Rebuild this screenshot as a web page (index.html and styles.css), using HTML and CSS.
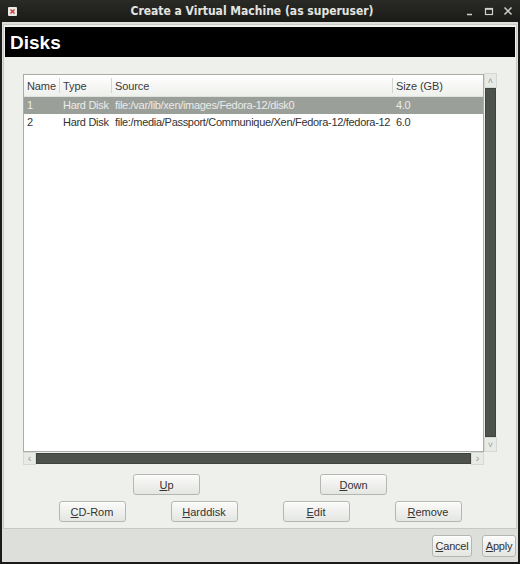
FILE: index.html
```html
<!DOCTYPE html>
<html lang="en">
<head>
    <meta charset="UTF-8">
    <title>Create a Virtual Machine (as superuser)</title>
    <link rel="stylesheet" href="styles.css">
</head>
<body>
    <div class="window">
        <div class="titlebar">
            <div class="menu-btn">
                <svg width="9" height="9" viewBox="0 0 9 9"><path d="M2.5 2.5 L6.5 6.5 M6.5 2.5 L2.5 6.5" stroke="#c33" stroke-width="1.3"/></svg>
            </div>
            <div class="title">Create a Virtual Machine (as superuser)</div>
            <div class="controls">
                <svg width="10" height="10" viewBox="0 0 10 10"><path d="M2 8.5 H7" stroke="#cfd1cc" stroke-width="1.5"/></svg>
                <svg width="10" height="10" viewBox="0 0 10 10"><rect x="1.5" y="2.5" width="7" height="6" fill="none" stroke="#cfd1cc" stroke-width="1.2"/><path d="M1.5 3 H8.5" stroke="#cfd1cc" stroke-width="1.6"/></svg>
                <svg width="10" height="10" viewBox="0 0 10 10"><path d="M1.5 1.5 L8.5 8.5 M8.5 1.5 L1.5 8.5" stroke="#cfd1cc" stroke-width="1.5"/></svg>
            </div>
        </div>
        <div class="client">
            <div class="page">
                <div class="page-header">Disks</div>

                <div class="listwrap">
                    <div class="list">
                        <div class="row head">
                            <div class="c-name">Name</div>
                            <div class="c-type">Type</div>
                            <div class="c-src">Source</div>
                            <div class="c-size">Size (GB)</div>
                        </div>
                        <div class="row selected">
                            <div class="c-name">1</div>
                            <div class="c-type">Hard Disk</div>
                            <div class="c-src">file:/var/lib/xen/images/Fedora-12/disk0</div>
                            <div class="c-size">4.0</div>
                        </div>
                        <div class="row">
                            <div class="c-name">2</div>
                            <div class="c-type">Hard Disk</div>
                            <div class="c-src">file:/media/Passport/Communique/Xen/Fedora-12/fedora-12</div>
                            <div class="c-size">6.0</div>
                        </div>
                    </div>
                    <div class="vscroll">
                        <div class="arrow">&#708;</div>
                        <div class="trough"></div>
                        <div class="arrow">&#709;</div>
                    </div>
                    <div class="hscroll">
                        <div class="arrow">&lsaquo;</div>
                        <div class="trough"></div>
                        <div class="arrow">&rsaquo;</div>
                    </div>
                    <div class="corner"></div>
                </div>

                <div class="btn-row row-one">
                    <button class="btn"><u>U</u>p</button>
                    <button class="btn"><u>D</u>own</button>
                </div>
                <div class="btn-row row-two">
                    <button class="btn"><u>C</u>D-Rom</button>
                    <button class="btn"><u>H</u>arddisk</button>
                    <button class="btn"><u>E</u>dit</button>
                    <button class="btn"><u>R</u>emove</button>
                </div>
            </div>
            <div class="footer">
                <button class="btn cancel"><u>C</u>ancel</button>
                <button class="btn apply"><u>A</u>pply</button>
            </div>
        </div>
    </div>
</body>
</html>
```

FILE: styles.css
```css
body{
    margin: 0;
    background-color: #1b1c19;
    font-family: "Liberation Sans", Arial, sans-serif;
    font-size: 11px;
    color: #333;
}

.window{
    width: 520px;
    height: 564px;
    display: flex;
    flex-direction: column;
}

.titlebar{
    height: 22px;
    display: flex;
    align-items: center;
    padding: 0 6px 0 8px;
    background: linear-gradient(#2a2b27, #1a1b18);
}
.menu-btn{
    width: 9px;
    height: 9px;
    background-color: #e9e9e6;
    border-radius: 1px;
    margin-top: 1px;
}
.menu-btn svg{
    display: block;
}
.title{
    flex: 1;
    text-align: center;
    color: #e4e4e0;
    font-family: "DejaVu Sans Condensed", "DejaVu Sans", sans-serif;
    font-size: 12px;
    font-weight: bold;
    padding-left: 22px;
}
.controls{
    display: flex;
    gap: 9px;
    margin-right: 1px;
}
.controls svg{
    display: block;
}

.client{
    flex: 1;
    margin: 0 2px 2px;
    background-color: #dcdfda;
    display: flex;
    flex-direction: column;
}

.page{
    margin: 2px 1px 0 1px;
    height: 505px;
    box-sizing: border-box;
    background-color: #eef0ec;
    border: 1px solid #c7cac4;
    padding: 2px 1px 0;
}

.page-header{
    background-color: #000;
    color: #fff;
    font-size: 19px;
    font-weight: bold;
    height: 30px;
    line-height: 31px;
    padding-left: 5px;
}

.listwrap{
    margin: 16px 18px 0 18px;
    display: grid;
    grid-template-columns: 1fr 13px;
    grid-template-rows: 379px 13px;
}

.list{
    background-color: #fff;
    border: 1px solid #a9aca7;
    margin-top: 1px;
    overflow: hidden;
}
.row{
    display: flex;
    height: 17px;
    line-height: 17px;
    white-space: nowrap;
    letter-spacing: -0.3px;
}
.row > div{
    padding-left: 3px;
    box-sizing: border-box;
}
.row.head{
    height: 21px;
    line-height: 22px;
    color: #3a3a3a;
    letter-spacing: -0.1px;
    background: linear-gradient(#ffffff, #eef0ec);
    border-bottom: 1px solid #e0e2de;
}
.row.head > div{
    border-right: 1px solid #d3d5d0;
    height: 15px;
    line-height: 17px;
    margin-top: 3px;
}
.row.head > .c-size{
    border-right: 0;
}
.c-name{ width: 36px; }
.c-type{ width: 52px; }
.c-src{ width: 281px; }
.c-size{ flex: 1; }

.row.selected{
    background-color: #9b9f99;
    color: #ececea;
}

.vscroll{
    display: flex;
    flex-direction: column;
}
.hscroll{
    display: flex;
}
.arrow{
    width: 13px;
    height: 13px;
    box-sizing: border-box;
    background-color: #e8eae6;
    border: 1px solid #d6d8d3;
    color: #9a9c98;
    font-size: 9px;
    line-height: 11px;
    text-align: center;
}
.hscroll .arrow{
    font-size: 11px;
}
.vscroll .arrow{
    height: 15px;
    line-height: 14px;
}
.trough{
    flex: 1;
    background-color: #4e524d;
    border: 1px solid #3f423e;
}
.vscroll .trough{
    margin: 0 1px;
}
.hscroll .trough{
    margin: 1px 0;
}

.btn-row{
    display: flex;
    justify-content: center;
}
.row-one{
    margin-top: 9px;
    gap: 120px;
}
.row-two{
    margin-top: 6px;
    gap: 45px;
}

.btn{
    width: 67px;
    height: 21px;
    padding: 0;
    font-family: "Liberation Sans", Arial, sans-serif;
    font-size: 11px;
    color: #333;
    background: linear-gradient(#fbfbfa, #e4e6e2);
    border: 1px solid #b5b8b2;
    border-radius: 3px;
    box-shadow: inset 0 1px 0 #fff;
}

.footer{
    flex: 1;
    display: flex;
    justify-content: flex-end;
    align-items: center;
    gap: 10px;
    padding-right: 2px;
}
.btn.cancel{
    width: 40px;
    height: 22px;
    letter-spacing: -0.2px;
}
.btn.apply{
    width: 34px;
    height: 22px;
    letter-spacing: -0.2px;
}
```
